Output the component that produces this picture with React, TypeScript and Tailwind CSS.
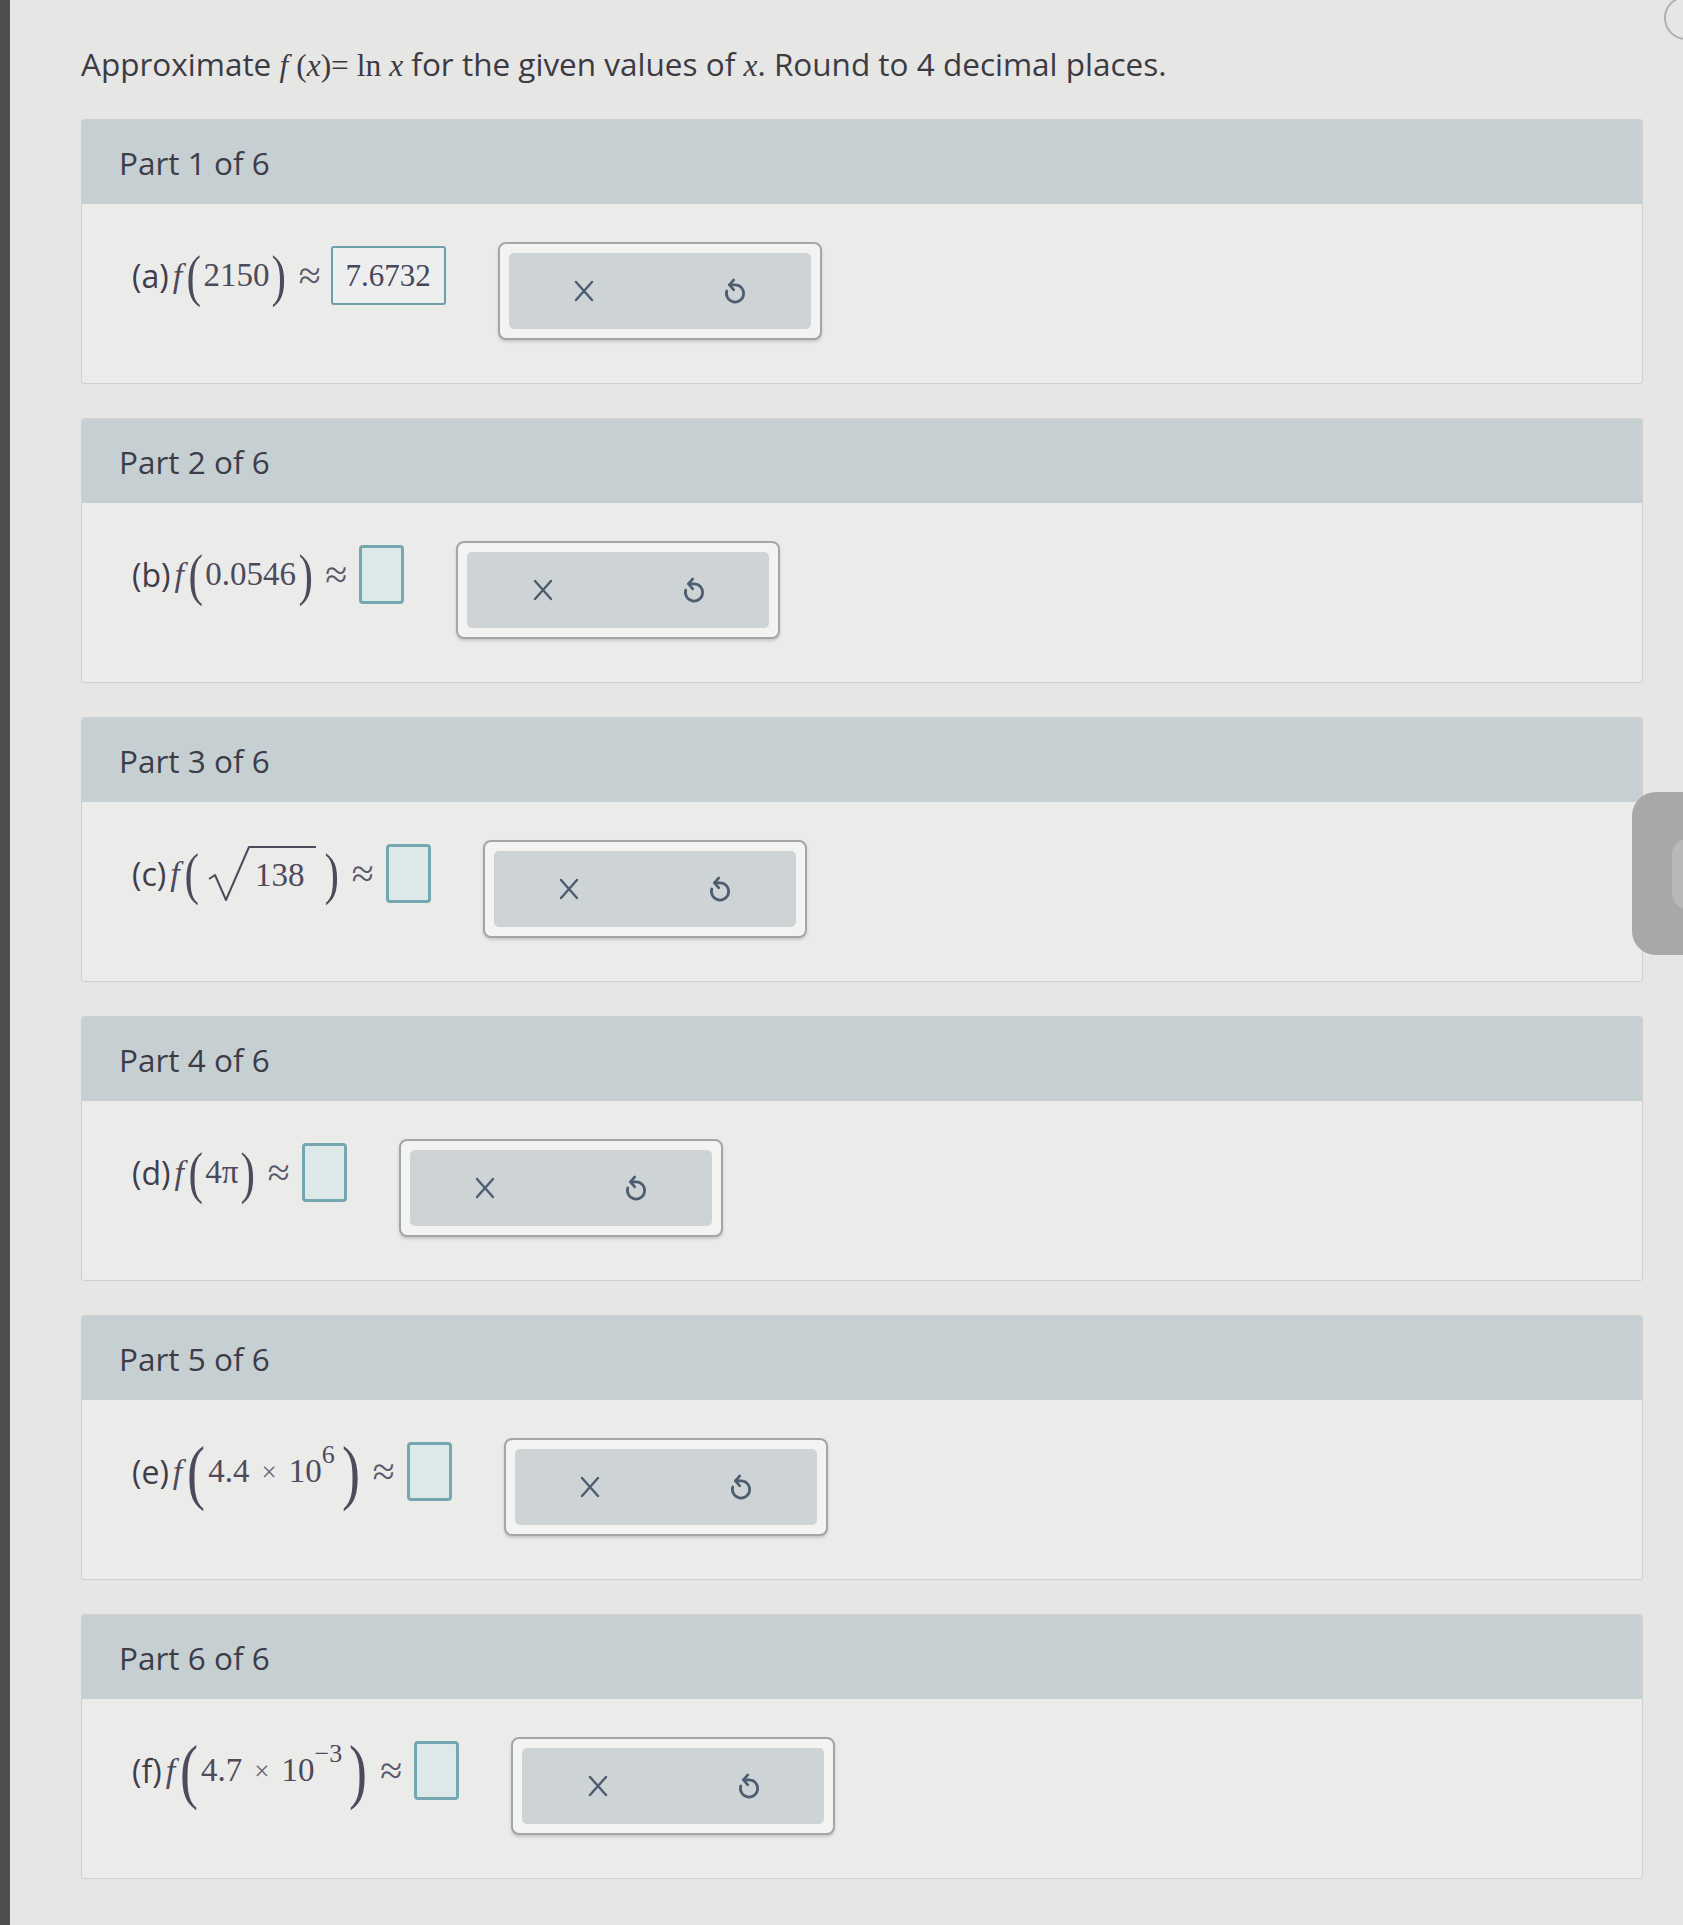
import React from 'react';

const serif = "font-['Liberation_Serif',serif]";
const sans = "font-['Open_Sans','Noto_Sans',sans-serif]";

const ClearIcon = () => (
  <svg width="24" height="26" viewBox="0 0 24 26" fill="none" stroke="#4d5d70" strokeWidth="2.4" strokeLinecap="round">
    <path d="M4 4 L20 22 M20 4 L4 22" />
  </svg>
);

const UndoIcon = () => (
  <svg width="28" height="32" viewBox="0 0 22 26" fill="none" stroke="#4d5d70" strokeWidth="2.2" strokeLinecap="round" strokeLinejoin="round">
    <path d="M6.5 8 H11 A7 7 0 1 1 4.3 13" />
    <path d="M10 4 L6.5 8 L10 12" />
  </svg>
);

const Paren = ({ side, big }: { side: 'l' | 'r'; big?: boolean }) => (
  <span className={`${serif} inline-block leading-none text-[#4d4a5c] scale-x-75 ${big ? 'text-[72px]' : 'text-[58px]'}`}>
    {side === 'l' ? '(' : ')'}
  </span>
);

const AnswerBox = ({ value }: { value?: string }) =>
  value ? (
    <span className={`${serif} ml-[10px] inline-flex items-center justify-center w-[115px] h-[59px] border-2 border-[#6c9fab] rounded-[3px] bg-[#edefee] text-[31px] text-[#48465a]`}>
      {value}
    </span>
  ) : (
    <span className="ml-[12px] inline-block w-[45px] h-[59px] border-[3px] border-[#74a7b0] rounded-[4px] bg-[#dde8e8]" />
  );

const ButtonGroup = () => (
  <div className="ml-[52px] w-[324px] h-[98px] border-2 border-[#a3a6a9] rounded-[8px] bg-[#f3f3f2] p-[9px] shadow-[0_2px_3px_rgba(0,0,0,0.15)]">
    <div className="flex h-full rounded-[5px] bg-[#ced3d5]">
      <div className="flex-1 flex items-center justify-center">
        <ClearIcon />
      </div>
      <div className="flex-1 flex items-center justify-center">
        <UndoIcon />
      </div>
    </div>
  </div>
);

const Label = ({ t }: { t: string }) => (
  <span className={`${sans} text-[32px] text-[#3f3d4a] mr-[4px]`}>({t})</span>
);

const F = () => <span className={`${serif} italic text-[34px] text-[#4d4a5c] mr-[2px]`}>f</span>;

const Num = ({ children }: { children: React.ReactNode }) => (
  <span className={`${serif} text-[33px] text-[#4d4a5c]`}>{children}</span>
);

const Approx = () => <span className={`${serif} text-[40px] leading-none text-[#5a5868] ml-[10px]`}>≈</span>;

const Times = () => <span className={`${serif} text-[27px] text-[#6a6878] mx-[12px]`}>×</span>;

// exponent sits at the top of the row
const Sup = ({ children }: { children: React.ReactNode }) => (
  <span className={`${serif} self-start leading-none text-[26px] text-[#4d4a5c] mr-[4px]`}>{children}</span>
);

const Sqrt = ({ children }: { children: React.ReactNode }) => (
  <span className="inline-flex items-start ml-[6px] mr-[6px]">
    <svg width="44" height="56" viewBox="0 0 44 56" fill="none" stroke="#4d4a5c" strokeWidth="2" strokeLinejoin="round">
      <path d="M2 33 L8 29 L19 54 L42 1 L44 1" />
    </svg>
    <span className={`${serif} text-[33px] text-[#4d4a5c] border-t-2 border-[#4d4a5c] pl-[4px] pr-[12px] leading-[54px]`}>
      {children}
    </span>
  </span>
);

const parts = [
  {
    id: 1,
    expr: (
      <>
        <Label t="a" />
        <F />
        <Paren side="l" />
        <Num>2150</Num>
        <Paren side="r" />
        <Approx />
        <AnswerBox value="7.6732" />
      </>
    ),
  },
  {
    id: 2,
    expr: (
      <>
        <Label t="b" />
        <F />
        <Paren side="l" />
        <Num>0.0546</Num>
        <Paren side="r" />
        <Approx />
        <AnswerBox />
      </>
    ),
  },
  {
    id: 3,
    expr: (
      <>
        <Label t="c" />
        <F />
        <Paren side="l" />
        <Sqrt>138</Sqrt>
        <Paren side="r" />
        <Approx />
        <AnswerBox />
      </>
    ),
  },
  {
    id: 4,
    expr: (
      <>
        <Label t="d" />
        <F />
        <Paren side="l" />
        <Num>4π</Num>
        <Paren side="r" />
        <Approx />
        <AnswerBox />
      </>
    ),
  },
  {
    id: 5,
    expr: (
      <>
        <Label t="e" />
        <F />
        <Paren side="l" big />
        <Num>4.4</Num>
        <Times />
        <Num>10</Num>
        <Sup>6</Sup>
        <Paren side="r" big />
        <Approx />
        <AnswerBox />
      </>
    ),
  },
  {
    id: 6,
    expr: (
      <>
        <Label t="f" />
        <F />
        <Paren side="l" big />
        <Num>4.7</Num>
        <Times />
        <Num>10</Num>
        <Sup>−3</Sup>
        <Paren side="r" big />
        <Approx />
        <AnswerBox />
      </>
    ),
  },
];

export default function App() {
  return (
    <div className="relative min-h-[1925px] flex bg-[#e6e6e4] overflow-hidden">
      <div className="w-[10px] bg-[#4e4e4e]" />

      <div className="flex-1 pl-[71px] pr-[40px] pt-[40px]">
        <h1 className={`${sans} text-[31.5px] text-[#3c3b44]`}>
          Approximate <span className={`${serif} italic`}>f</span>
          <span className={serif}> (</span>
          <span className={`${serif} italic`}>x</span>
          <span className={serif}>)= ln</span>
          <span className={`${serif} italic`}> x</span> for the given values of{' '}
          <span className={`${serif} italic`}>x</span>. Round to 4 decimal places.
        </h1>

        <div className="mt-[30px] flex flex-col gap-[34px]">
          {parts.map((p) => (
            <div key={p.id} className="h-[265px] border border-[#cfd0cf] rounded-[3px] bg-[#ebebea] overflow-hidden">
              <div className="h-[84px] bg-[#c6d0d2] flex items-center pl-[37px]">
                <span className={`${sans} text-[31.5px] text-[#3d3c48]`}>Part {p.id} of 6</span>
              </div>
              <div className="pt-[38px] pl-[50px]">
                <div className="flex items-start">
                  <div className="flex items-center h-[59px] mt-[4px]">{p.expr}</div>
                  <ButtonGroup />
                </div>
              </div>
            </div>
          ))}
        </div>
      </div>

      {/* side handle overlay on the right edge */}
      <div className="absolute left-[1632px] top-[792px] w-[70px] h-[163px] rounded-l-[24px] bg-[#a8a8a8] flex items-center pl-[40px]">
        <div className="w-[40px] h-[70px] rounded-full bg-[#b8b8b8]" />
      </div>
      <div className="absolute left-[1664px] top-[-4px] w-[44px] h-[44px] rounded-full border-2 border-[#b0b0b0]" />
    </div>
  );
}
